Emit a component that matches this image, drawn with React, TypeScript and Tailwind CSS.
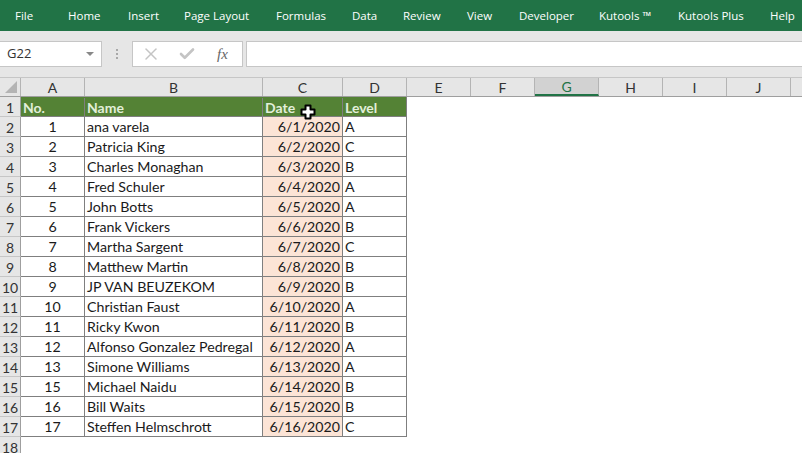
import { Check, X } from "lucide-react"

const tabs = [
  { label: "File", cls: "w-[68px] pl-[15px]" },
  { label: "Home", cls: "w-[60px]" },
  { label: "Insert", cls: "w-[56px]" },
  { label: "Page Layout", cls: "w-[92px]" },
  { label: "Formulas", cls: "w-[76px]" },
  { label: "Data", cls: "w-[51px]" },
  { label: "Review", cls: "w-[64px]" },
  { label: "View", cls: "w-[52px]" },
  { label: "Developer", cls: "w-[80px]" },
  { label: "Kutools ™", cls: "w-[79px]" },
  { label: "Kutools Plus", cls: "w-[92px]" },
  { label: "Help", cls: "w-[32px]" },
]

const people = [
  ["1", "ana varela", "6/1/2020", "A"],
  ["2", "Patricia King", "6/2/2020", "C"],
  ["3", "Charles Monaghan", "6/3/2020", "B"],
  ["4", "Fred Schuler", "6/4/2020", "A"],
  ["5", "John Botts", "6/5/2020", "A"],
  ["6", "Frank Vickers", "6/6/2020", "B"],
  ["7", "Martha Sargent", "6/7/2020", "C"],
  ["8", "Matthew Martin", "6/8/2020", "B"],
  ["9", "JP VAN BEUZEKOM", "6/9/2020", "B"],
  ["10", "Christian Faust", "6/10/2020", "A"],
  ["11", "Ricky Kwon", "6/11/2020", "B"],
  ["12", "Alfonso Gonzalez Pedregal", "6/12/2020", "A"],
  ["13", "Simone Williams", "6/13/2020", "A"],
  ["15", "Michael Naidu", "6/14/2020", "B"],
  ["16", "Bill Waits", "6/15/2020", "B"],
  ["17", "Steffen Helmschrott", "6/16/2020", "C"],
]

const columns = [
  { label: "A", cls: "w-[64px]" },
  { label: "B", cls: "w-[178px]" },
  { label: "C", cls: "w-[80px]" },
  { label: "D", cls: "w-[64px]" },
  { label: "E", cls: "w-[64px]" },
  { label: "F", cls: "w-[64px]" },
  { label: "G", cls: "w-[64px]" },
  { label: "H", cls: "w-[64px]" },
  { label: "I", cls: "w-[64px]" },
  { label: "J", cls: "w-[64px]" },
  { label: "", cls: "w-[12px]" },
]

function RowHeader({ n }: { n: number }) {
  return (
    <div className="flex h-[20px] w-[21px] shrink-0 items-center justify-center border-r border-b border-r-[#9f9f9f] border-b-[#c6c6c6] bg-[#e6e6e6] pt-[1px] text-[14px] text-[#333]">
      {n}
    </div>
  )
}

function CellCursor() {
  return (
    <svg className="absolute top-[6px] left-[37px]" width="16" height="16" viewBox="0 0 16 16">
      <path d="M5.5 1.5h5v4h4v5h-4v4h-5v-4h-4v-5h4z" fill="#fff" stroke="#000" strokeWidth="2" strokeLinejoin="round" />
    </svg>
  )
}

export default function App() {
  return (
    <div className="h-[453px] w-[802px] overflow-hidden bg-white font-['Lato',sans-serif]">
      <div className="flex h-[31px] items-center bg-[#217346] font-['Open_Sans',sans-serif] text-[11.5px] text-white">
        {tabs.map((t) => (
          <div key={t.label} className={`${t.cls} shrink-0 whitespace-nowrap`}>
            {t.label}
          </div>
        ))}
      </div>

      <div className="flex h-[46px] items-start bg-[#e6e6e6] pt-[10px]">
        <div className="flex h-[26px] w-[102px] shrink-0 items-center justify-between border border-l-0 border-[#c6c6c6] bg-white px-[7px] font-['Open_Sans',sans-serif] text-[13px] text-[#333]">
          G22
          <div className="h-0 w-0 border-x-[4px] border-t-[4px] border-x-transparent border-t-[#888]" />
        </div>
        <div className="flex h-[26px] w-[30px] shrink-0 flex-col items-center justify-center gap-[2px]">
          <div className="h-[2px] w-[2px] bg-[#a8a8a8]" />
          <div className="h-[2px] w-[2px] bg-[#a8a8a8]" />
          <div className="h-[2px] w-[2px] bg-[#a8a8a8]" />
        </div>
        <div className="flex h-[26px] w-[111px] shrink-0 items-center border border-[#c6c6c6] bg-white">
          <X className="ml-[8px] shrink-0 text-[#c4c4c4]" size={20} strokeWidth={1.8} />
          <Check className="ml-[17px] shrink-0 text-[#c4c4c4]" size={18} strokeWidth={3.5} />
          <span className="ml-[21px] font-['Liberation_Serif',serif] text-[15px] text-[#666] italic">
            fx
          </span>
        </div>
        <div className="ml-[3px] h-[26px] flex-1 border border-r-0 border-[#c6c6c6] bg-white" />
      </div>

      <div className="flex h-[20px] border-t border-b border-t-[#c6c6c6] border-b-[#9f9f9f] bg-[#e6e6e6]">
        <div className="relative w-[21px] shrink-0 border-r border-[#b4b4b4]">
          <svg className="absolute right-[3px] bottom-[3px]" width="12" height="12" viewBox="0 0 12 12">
            <path d="M12 0v12H0z" fill="#b4b4b4" />
          </svg>
        </div>
        {columns.map((c) => (
          <div
            key={c.label || "K"}
            className={
              c.label === "G"
                ? `${c.cls} flex shrink-0 items-center justify-center border-r border-b-2 border-r-[#b4b4b4] border-b-[#217346] bg-[#d2d2d2] text-[14px] text-[#217346]`
                : `${c.cls} flex shrink-0 items-center justify-center border-r border-[#b4b4b4] text-[14px] text-[#333]`
            }
          >
            {c.label}
          </div>
        ))}
      </div>

      <div className="flex">
        <RowHeader n={1} />
        <div className="flex h-[20px] border-r border-b border-[#7f7f7f] bg-[#548235] pt-[1px] text-[14px] font-bold text-[#e2efda]">
          <div className="flex w-[64px] items-center border-r border-[#7f7f7f] pl-[2px]">No.</div>
          <div className="flex w-[178px] items-center border-r border-[#7f7f7f] pl-[2px]">Name</div>
          <div className="relative flex w-[80px] items-center border-r border-[#7f7f7f] pl-[2px]">
            Date
            <CellCursor />
          </div>
          <div className="flex w-[63px] items-center pl-[2px]">Level</div>
        </div>
      </div>

      {people.map((p, i) => (
        <div key={p[0]} className="flex">
          <RowHeader n={i + 2} />
          <div className="flex h-[20px] border-r border-b border-[#7f7f7f] text-[14.2px] text-[#1a1a1a]">
            <div className="flex w-[64px] items-center justify-center border-r border-[#7f7f7f] pt-[1px]">{p[0]}</div>
            <div className="flex w-[178px] items-center border-r border-[#7f7f7f] pt-[1px] pl-[2px] whitespace-nowrap">{p[1]}</div>
            <div className="flex w-[80px] items-center justify-end border-r border-[#7f7f7f] bg-[#fce4d6] pt-[1px] pr-[2px]">{p[2]}</div>
            <div className="flex w-[63px] items-center pt-[1px] pl-[2px]">{p[3]}</div>
          </div>
        </div>
      ))}

      <RowHeader n={18} />
    </div>
  )
}
